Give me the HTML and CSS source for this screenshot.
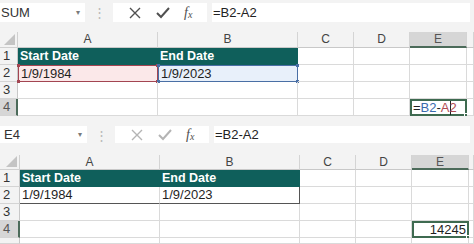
FILE: index.html
```html
<!DOCTYPE html>
<html lang="en">
<head>
    <meta charset="UTF-8">
    <title>Date difference</title>
    <link rel="stylesheet" href="styles.css">
</head>
<body>
    <div class="panel panel-top">
        <div class="fbar">
            <div class="namebox"><span>SUM</span><span class="caret">&#9662;</span></div>
            <div class="grip">&#8942;</div>
            <div class="btns">
                <svg class="ico" width="14" height="14" viewBox="0 0 14 14"><path d="M2 2 L12 12 M12 2 L2 12" stroke="#505050" stroke-width="1.4" fill="none"/></svg>
                <svg class="ico" width="16" height="14" viewBox="0 0 16 14"><path d="M2 7 L6 11 L14 2" stroke="#505050" stroke-width="2" fill="none"/></svg>
                <span class="fx">f<sub>x</sub></span>
            </div>
            <div class="formula">=B2-A2</div>
        </div>
        <div class="sheet">
            <div class="corner"><span class="tri"></span></div>
            <div class="colhdr">A</div>
            <div class="colhdr">B</div>
            <div class="colhdr">C</div>
            <div class="colhdr">D</div>
            <div class="colhdr active">E</div>
            <div class="colhdr"></div>

            <div class="rowhdr">1</div>
            <div class="cell head">Start Date</div>
            <div class="cell head">End Date</div>
            <div class="cell"></div><div class="cell"></div><div class="cell"></div><div class="cell"></div>

            <div class="rowhdr">2</div>
            <div class="cell ref-red">1/9/1984<i class="h tl"></i><i class="h tr"></i><i class="h bl"></i><i class="h br"></i></div>
            <div class="cell ref-blue">1/9/2023<i class="h tl"></i><i class="h tr"></i><i class="h bl"></i><i class="h br"></i></div>
            <div class="cell"></div><div class="cell"></div><div class="cell"></div><div class="cell"></div>

            <div class="rowhdr">3</div>
            <div class="cell"></div><div class="cell"></div><div class="cell"></div><div class="cell"></div><div class="cell"></div><div class="cell"></div>

            <div class="rowhdr active">4</div>
            <div class="cell"></div><div class="cell"></div><div class="cell"></div><div class="cell"></div>
            <div class="cell sel edit">=<span class="blue">B2</span>-<span class="red">A<span class="cur"></span>2</span><i class="grab"></i></div>
            <div class="cell"></div>
        </div>
    </div>

    <div class="panel panel-bottom">
        <div class="fbar">
            <div class="namebox"><span>E4</span><span class="caret">&#9662;</span></div>
            <div class="grip">&#8942;</div>
            <div class="btns">
                <svg class="ico" width="14" height="14" viewBox="0 0 14 14"><path d="M2 2 L12 12 M12 2 L2 12" stroke="#b4b4b4" stroke-width="1.4" fill="none"/></svg>
                <svg class="ico" width="16" height="14" viewBox="0 0 16 14"><path d="M2 7 L6 11 L14 2" stroke="#b4b4b4" stroke-width="2" fill="none"/></svg>
                <span class="fx">f<sub>x</sub></span>
            </div>
            <div class="formula">=B2-A2</div>
        </div>
        <div class="sheet">
            <div class="corner"><span class="tri"></span></div>
            <div class="colhdr">A</div>
            <div class="colhdr">B</div>
            <div class="colhdr">C</div>
            <div class="colhdr">D</div>
            <div class="colhdr active">E</div>
            <div class="colhdr"></div>

            <div class="rowhdr">1</div>
            <div class="cell head">Start Date</div>
            <div class="cell head">End Date</div>
            <div class="cell"></div><div class="cell"></div><div class="cell"></div><div class="cell"></div>

            <div class="rowhdr">2</div>
            <div class="cell tbl-b">1/9/1984</div>
            <div class="cell tbl-b tbl-r">1/9/2023</div>
            <div class="cell"></div><div class="cell"></div><div class="cell"></div><div class="cell"></div>

            <div class="rowhdr">3</div>
            <div class="cell"></div><div class="cell"></div><div class="cell"></div><div class="cell"></div><div class="cell"></div><div class="cell"></div>

            <div class="rowhdr active">4</div>
            <div class="cell"></div><div class="cell"></div><div class="cell"></div><div class="cell"></div>
            <div class="cell sel num">14245<i class="grab"></i></div>
            <div class="cell"></div>

            <div class="rowhdr"></div>
            <div class="cell"></div><div class="cell"></div><div class="cell"></div><div class="cell"></div><div class="cell"></div><div class="cell"></div>
        </div>
    </div>
</body>
</html>
```

FILE: styles.css
```css
* {
    margin: 0;
    padding: 0;
    box-sizing: border-box;
}

body {
    width: 474px;
    height: 244px;
    overflow: hidden;
    background-color: #ffffff;
    font-family: 'Liberation Sans', Arial, sans-serif;
    color: #1f1f1f;
}

.panel {
    background-color: #f3f3f3;
    overflow: hidden;
}

.panel-top {
    height: 116px;
}

.panel-bottom {
    height: 128px;
    padding-top: 10px;
}

/* formula bar */
.fbar {
    display: flex;
    align-items: stretch;
    height: 19px;
    margin-top: 3px;
    margin-bottom: 10px;
}

.panel-bottom .fbar {
    margin-top: 0;
    height: 17px;
    margin-bottom: 12px;
}

.namebox {
    width: 85px;
    background-color: #ffffff;
    display: flex;
    align-items: center;
    justify-content: space-between;
    padding: 0 5px 0 1px;
    font-size: 13px;
    color: #333333;
}

.panel-bottom .namebox {
    width: 87px;
    padding-left: 4px;
}

.caret {
    font-size: 8px;
    color: #7a7a7a;
}

.grip {
    width: 28px;
    text-align: center;
    color: #b8b8b8;
    font-size: 13px;
    line-height: 19px;
}

.btns {
    width: 94px;
    background-color: #ffffff;
    display: flex;
    align-items: center;
    justify-content: space-around;
    padding: 0 8px;
}

.fx {
    font-family: 'Liberation Serif', serif;
    font-style: italic;
    font-size: 14px;
    color: #505050;
}

.fx sub {
    font-size: 10px;
    vertical-align: -1px;
}

.formula {
    flex: 1;
    margin-left: 5px;
    margin-right: 4px;
    background-color: #ffffff;
    font-size: 13px;
    line-height: 19px;
    padding-left: 1px;
    color: #222222;
}

.panel-bottom .formula {
    line-height: 17px;
}

/* grid */
.sheet {
    display: grid;
    grid-template-columns: 18px 140px 140px 56px 56px 57px 1fr;
    grid-template-rows: 16px repeat(4, 17px);
    background-color: #ffffff;
}

.panel-bottom .sheet {
    grid-template-columns: 20px 140px 140px 56px 56px 57px 1fr;
    grid-template-rows: 15px repeat(4, 17px) 6px;
}

.corner {
    background-color: #f3f3f3;
    border-right: 1px solid #d0d0d0;
    border-bottom: 1px solid #d0d0d0;
    position: relative;
}

.tri {
    position: absolute;
    right: 2px;
    bottom: 2px;
    width: 0;
    height: 0;
    border-left: 11px solid transparent;
    border-bottom: 11px solid #c4c4c4;
}

.colhdr {
    background-color: #f3f3f3;
    border-right: 1px solid #d4d4d4;
    border-bottom: 1px solid #c8c8c8;
    text-align: center;
    font-size: 12px;
    line-height: 15px;
    color: #444444;
}

.colhdr.active {
    background-color: #d6d6d6;
    border-bottom: 2px solid #4c6b5a;
    color: #555555;
}

.rowhdr {
    background-color: #f3f3f3;
    border-right: 1px solid #c8c8c8;
    border-bottom: 1px solid #d4d4d4;
    font-size: 13px;
    line-height: 16px;
    padding-left: 3px;
    color: #333333;
}

.rowhdr.active {
    background-color: #d6d6d6;
    border-right: 2px solid #4c6b5a;
    color: #555555;
}

.cell {
    border-right: 1px solid #dadada;
    border-bottom: 1px solid #dadada;
    font-size: 13px;
    line-height: 16px;
    padding-left: 2px;
    white-space: nowrap;
    position: relative;
}

.cell.head {
    background-color: #0f5f5b;
    color: #ffffff;
    font-weight: bold;
    font-size: 12.5px;
    border-right-color: #0f5f5b;
    border-bottom-color: #0f5f5b;
}

.ref-red {
    background-color: #fbe8e9;
    border: 1px solid #a34551;
}

.ref-blue {
    background-color: #e8f0fa;
    border: 1px solid #4a6fa5;
}

.h {
    position: absolute;
    width: 3px;
    height: 3px;
}

.ref-red .h { background-color: #a34551; }
.ref-blue .h { background-color: #4a6fa5; }

.h.tl { left: -2px; top: -2px; }
.h.tr { right: -2px; top: -2px; }
.h.bl { left: -2px; bottom: -2px; }
.h.br { right: -2px; bottom: -2px; }

.tbl-b {
    border-bottom: 1px solid #555555;
}

.tbl-r {
    border-right: 1px solid #555555;
}

.sel {
    border: 2px solid #3e6a50;
    line-height: 13px;
    padding-left: 1px;
}

.sel.num {
    text-align: right;
    padding-right: 1px;
}

.grab {
    position: absolute;
    right: -3px;
    bottom: -3px;
    width: 4px;
    height: 4px;
    background-color: #3e6a50;
    border: 1px solid #ffffff;
}

.blue {
    color: #3a6aad;
}

.red {
    color: #b04b52;
}

.cur {
    display: inline-block;
    width: 1px;
    height: 14px;
    background-color: #222222;
    vertical-align: -3px;
    margin-right: -1px;
}
```
